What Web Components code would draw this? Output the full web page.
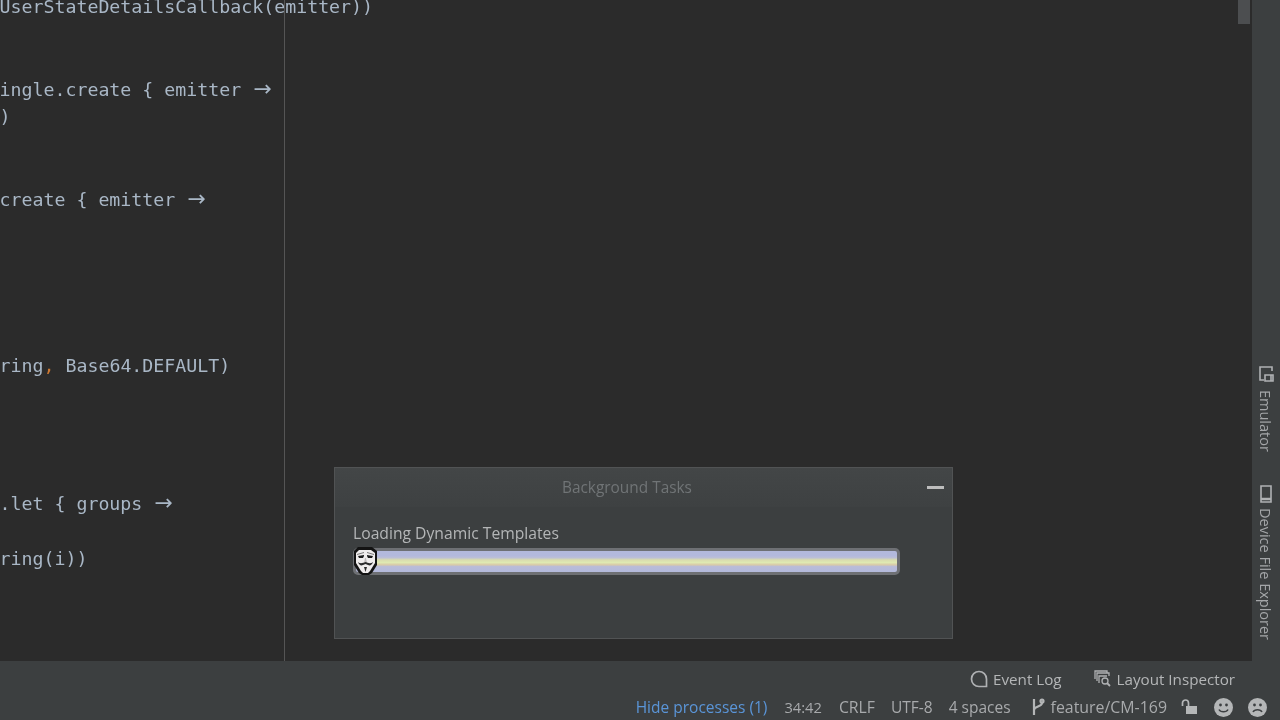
<!DOCTYPE html>
<html>
<head>
<meta charset="utf-8">
<title>Background Tasks</title>
<style>
  html, body { margin: 0; height: 100%; background: #3c3f40; overflow: hidden; }
  body { display: flex; flex-direction: column; width: 1280px; height: 720px; font-family: "Open Sans", "Noto Sans", sans-serif; filter: blur(0.4px); }
  .main { flex: 1; display: flex; min-height: 0; }
</style>
</head>
<body>
<div class="main">
  <ide-editor>
    <ide-tasks-dialog title="Background Tasks" task="Loading Dynamic Templates"></ide-tasks-dialog>
  </ide-editor>
  <ide-tool-stripe></ide-tool-stripe>
</div>
<ide-tool-bar></ide-tool-bar>
<ide-status-bar></ide-status-bar>

<script>
const ARROW = '<i>→</i>';
const CODE_LINES = [
  'UserStateDetailsCallback(emitter))', '', '',
  `ingle.create { emitter ${ARROW}`, ')', '', '',
  `create { emitter ${ARROW}`, '', '', '', '', '',
  'ring<b>,</b> Base64.DEFAULT)', '', '', '', '',
  `.let { groups ${ARROW}`, '',
  'ring(i))', '', ''
];

class IdeEditor extends HTMLElement {
  connectedCallback() {
    this.attachShadow({ mode: 'open' });
    this.shadowRoot.innerHTML = `
      <style>
        :host { display: block; flex: 1; position: relative; overflow: hidden; background: #2b2b2b; }
        .code {
          font: 18.25px/27.6px "DejaVu Sans Mono", "Liberation Mono", monospace;
          color: #a9b7c6;
          white-space: pre;
          width: 284px;
          margin-left: -0.5px;
        }
        .code div { height: 27.6px; }
        .code div:first-child { height: 20.6px; line-height: 13.6px; }
        .code b { font-weight: normal; color: #cc7832; }
        .code i { font: 22px/0 "DejaVu Sans", sans-serif; display: inline-block; width: 21px; text-align: center; }
        .rule { position: absolute; left: 284px; top: 0; bottom: 0; width: 1px; background: #555; }
        .thumb { position: absolute; left: 1238px; top: 0; width: 12px; height: 24px; background: #4c4e50; }
      </style>
      <div class="code">${CODE_LINES.map(l => `<div>${l}</div>`).join('')}</div>
      <div class="rule"></div>
      <div class="thumb"></div>
      <slot></slot>
    `;
  }
}

class IdeTasksDialog extends HTMLElement {
  connectedCallback() {
    this.attachShadow({ mode: 'open' });
    this.shadowRoot.innerHTML = `
      <style>
        :host {
          display: block; position: absolute; left: 334px; top: 467px;
          width: 619px; height: 172px; box-sizing: border-box;
          background: #3c3f40; border: 1px solid #515354;
          color: #bbb;
        }
        .head {
          height: 39px; display: flex; align-items: center; position: relative;
          background: linear-gradient(#434647, #3e4142);
          padding-left: 227px;
          font-size: 15.4px; color: #707476;
        }
        .head i { position: absolute; right: 8px; top: 18px; width: 17px; height: 3px; background: #bdbdbd; }
        .body { padding: 16px 18px 0; }
        .task { font-size: 15.7px; line-height: 20px; color: #b4b6b7; }
        ide-progress { margin-top: 5px; }
      </style>
      <div class="head"><span>${this.getAttribute('title')}</span><i></i></div>
      <div class="body">
        <div class="task">${this.getAttribute('task')}</div>
        <ide-progress></ide-progress>
      </div>
    `;
  }
}

class IdeProgress extends HTMLElement {
  connectedCallback() {
    this.attachShadow({ mode: 'open' });
    this.shadowRoot.innerHTML = `
      <style>
        :host { display: block; position: relative; width: 547px; height: 27px; box-sizing: border-box;
          border: 3px solid #6e7074; border-radius: 5px;
          background: linear-gradient(#b3b9dc 0 22%, #bcbfd6 32%, #d9dcae 42%, #dfe9b2 55%, #d8c9a8 66%, #b9bcd8 74%, #b3b9dc 100%); }
        svg { position: absolute; left: -3px; top: -4px; }
      </style>
      <svg width="25" height="28" viewBox="0 0 25 28">
        <path d="M5 0h14l5 4v14l-5 8-3 2h-7l-3-2-5-8V4z" fill="#131313"/>
        <path d="M6 3h12l4 3v10l-5 8-2 2h-5l-2-2-5-8V6z" fill="#efecec"/>
        <path d="M5 9l6-1v1l-1 2H6zM14 8l6 1-1 2h-4l-1-2z" fill="#1c1c1c"/>
        <path d="M4 7l7-2v1l-7 2zM21 7l-7-2v1l7 2z" fill="#7a7a7a"/>
        <path d="M12 11h1l1 5h-3z" fill="#bdb9b9"/>
        <path d="M5 15c2 2 5 1 7.500 0 2.500 1 5 2 7.500 0-1 3-3 4-5 3l-2.500-1-2.500 1c-2 1-4 0-5-3z" fill="#2a2a2a"/>
        <path d="M11 20h3l-1.500 5z" fill="#2a2a2a"/>
      </svg>
    `;
  }
}

class IdeToolStripe extends HTMLElement {
  connectedCallback() {
    this.attachShadow({ mode: 'open' });
    this.shadowRoot.innerHTML = `
      <style>
        :host { display: flex; flex-direction: column; align-items: center; width: 28px; box-sizing: border-box;
          padding: 365px 0 0; font-size: 14.5px; color: #a4a6a8; background: #3c3f40; }
        .tab { display: flex; flex-direction: row; align-items: center; gap: 5px; writing-mode: vertical-rl; white-space: nowrap; }
        .tab + .tab { margin-top: 33px; }
        .tab span { margin-right: 2px; }
        svg { display: block; fill: none; stroke: #afb1b3; stroke-width: 1.6; }
      </style>
      <div class="tab">
        <svg width="16" height="20" viewBox="0 0 16 20"><path d="M14 6V2H2v13h4"/><path d="M7 10h8v6H7z"/><path d="M13 10v6"/></svg>
        <span>Emulator</span>
      </div>
      <div class="tab">
        <svg width="14" height="18" viewBox="0 0 14 18"><path d="M2 1h10v16H2z"/><path d="M2 14h10" stroke-width="2.500"/></svg>
        <span>Device File Explorer</span>
      </div>
    `;
  }
}

class IdeToolBar extends HTMLElement {
  connectedCallback() {
    this.attachShadow({ mode: 'open' });
    this.shadowRoot.innerHTML = `
      <style>
        :host { display: flex; justify-content: flex-end; align-items: center; gap: 32px; height: 31px; box-sizing: border-box;
          padding: 4px 45px 0 0; font-size: 15.2px; color: #b4b6b7; background: #3c3f40; }
        .item { display: flex; align-items: center; gap: 5px; }
        svg { display: block; fill: none; stroke: #afb1b3; }
      </style>
      <div class="item">
        <svg width="18" height="18" viewBox="0 0 18 18" stroke-width="1.7"><path d="M9 1.500a7.500 7.500 0 0 0 0 15h7.500v-7.500a7.500 7.500 0 0 0-7.500-7.500z"/></svg>
        <span>Event Log</span>
      </div>
      <div class="item">
        <svg width="18" height="18" viewBox="0 0 18 18" stroke-width="1.3"><path d="M1 9V1h12v2M3 11V3h12v3M5 13V6h8"/><circle cx="11" cy="11" r="3"/><path d="M13 13l3 3" stroke-width="1.800"/></svg>
        <span>Layout Inspector</span>
      </div>
    `;
  }
}

class IdeStatusBar extends HTMLElement {
  connectedCallback() {
    this.attachShadow({ mode: 'open' });
    this.shadowRoot.innerHTML = `
      <style>
        :host { display: flex; justify-content: flex-end; align-items: center; height: 28px; box-sizing: border-box;
          padding: 2px 13px 0 0; font-size: 15.5px; color: #a8aaac; background: #3c3f40; }
        .link { color: #5a95d8; margin-right: 17px; }
        .cell { margin-right: 16px; }
        .pos { font-size: 14.7px; margin-right: 17px; }
        .crlf { font-size: 15.8px; }
        .branch { display: flex; align-items: center; gap: 6px; margin: 0 14px 0 4px; }
        .branch span { font-size: 15.9px; }
        svg { display: block; }
        .lock { margin-right: 17px; }
        .face { margin-right: 15px; }
        .face:last-child { margin-right: 0; }
      </style>
      <span class="link">Hide processes (1)</span>
      <span class="cell pos">34:42</span>
      <span class="cell crlf">CRLF</span>
      <span class="cell">UTF-8</span>
      <span class="cell">4 spaces</span>
      <div class="branch">
        <svg width="14" height="18" viewBox="0 0 14 18" fill="none" stroke="#b4b6b7" stroke-width="2.200"><path d="M3 1v16M3 12c0-4 8-3 8-7"/><circle cx="11" cy="3" r="1.500"/></svg>
        <span>feature/CM-169</span>
      </div>
      <svg class="lock" width="16" height="16" viewBox="0 0 16 16"><path d="M1.500 7V4a3 3 0 0 1 6 0v3" fill="none" stroke="#b4b6b7" stroke-width="1.700"/><rect x="5" y="7" width="11" height="8" fill="#b4b6b7"/></svg>
      <svg class="face" width="19" height="19" viewBox="0 0 19 19"><circle cx="9.500" cy="9.500" r="9.500" fill="#b4b6b7"/><circle cx="6.500" cy="7" r="1.400" fill="#3c3f41"/><circle cx="12.500" cy="7" r="1.400" fill="#3c3f41"/><path d="M5 11.500c1.500 3 7.500 3 9 0" fill="none" stroke="#3c3f41" stroke-width="1.500"/></svg>
      <svg class="face" width="19" height="19" viewBox="0 0 19 19"><circle cx="9.500" cy="9.500" r="9.500" fill="#b4b6b7"/><circle cx="6.500" cy="7" r="1.400" fill="#3c3f41"/><circle cx="12.500" cy="7" r="1.400" fill="#3c3f41"/><path d="M5 14c1.500-3 7.500-3 9 0" fill="none" stroke="#3c3f41" stroke-width="1.500"/></svg>
    `;
  }
}

customElements.define('ide-editor', IdeEditor);
customElements.define('ide-tasks-dialog', IdeTasksDialog);
customElements.define('ide-progress', IdeProgress);
customElements.define('ide-tool-stripe', IdeToolStripe);
customElements.define('ide-tool-bar', IdeToolBar);
customElements.define('ide-status-bar', IdeStatusBar);
</script>
</body>
</html>
